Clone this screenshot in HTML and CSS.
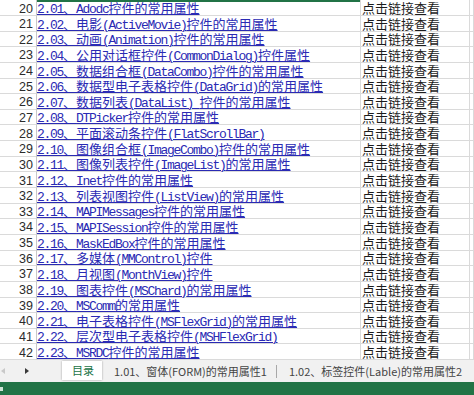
FILE: index.html
```html
<!DOCTYPE html>
<html lang="zh-CN">
<head>
<meta charset="utf-8">
<title>目录</title>
<link rel="stylesheet" href="styles.css">
</head>
<body>
<div class="sheet">
  <div class="grid">
    <div class="row first"><div class="rh">20</div><div class="cb"><a class="lnk"><span class="en">2.01</span>、<span class="en">Adodc</span>控件的常用属性</a></div><div class="cc">点击链接查看</div><div class="cd"></div></div>
    <div class="row"><div class="rh">21</div><div class="cb"><a class="lnk"><span class="en">2.02</span>、电影<span class="en">(ActiveMovie)</span>控件的常用属性</a></div><div class="cc">点击链接查看</div><div class="cd"></div></div>
    <div class="row"><div class="rh">22</div><div class="cb"><a class="lnk"><span class="en">2.03</span>、动画<span class="en">(Animation)</span>控件的常用属性</a></div><div class="cc">点击链接查看</div><div class="cd"></div></div>
    <div class="row"><div class="rh">23</div><div class="cb"><a class="lnk"><span class="en">2.04</span>、公用对话框控件<span class="en">(CommonDialog)</span>控件属性</a></div><div class="cc">点击链接查看</div><div class="cd"></div></div>
    <div class="row"><div class="rh">24</div><div class="cb"><a class="lnk"><span class="en">2.05</span>、数据组合框<span class="en">(DataCombo)</span>控件的常用属性</a></div><div class="cc">点击链接查看</div><div class="cd"></div></div>
    <div class="row"><div class="rh">25</div><div class="cb"><a class="lnk"><span class="en">2.06</span>、数据型电子表格控件<span class="en">(DataGrid)</span>的常用属性</a></div><div class="cc">点击链接查看</div><div class="cd"></div></div>
    <div class="row"><div class="rh">26</div><div class="cb"><a class="lnk"><span class="en">2.07</span>、数据列表<span class="en">(DataList) </span>控件的常用属性</a></div><div class="cc">点击链接查看</div><div class="cd"></div></div>
    <div class="row"><div class="rh">27</div><div class="cb"><a class="lnk"><span class="en">2.08</span>、<span class="en">DTPicker</span>控件的常用属性</a></div><div class="cc">点击链接查看</div><div class="cd"></div></div>
    <div class="row"><div class="rh">28</div><div class="cb"><a class="lnk"><span class="en">2.09</span>、平面滚动条控件<span class="en">(FlatScrollBar)</span></a></div><div class="cc">点击链接查看</div><div class="cd"></div></div>
    <div class="row"><div class="rh">29</div><div class="cb"><a class="lnk"><span class="en">2.10</span>、图像组合框<span class="en">(ImageCombo)</span>控件的常用属性</a></div><div class="cc">点击链接查看</div><div class="cd"></div></div>
    <div class="row"><div class="rh">30</div><div class="cb"><a class="lnk"><span class="en">2.11</span>、图像列表控件<span class="en">(ImageList)</span>的常用属性</a></div><div class="cc">点击链接查看</div><div class="cd"></div></div>
    <div class="row"><div class="rh">31</div><div class="cb"><a class="lnk"><span class="en">2.12</span>、<span class="en">Inet</span>控件的常用属性</a></div><div class="cc">点击链接查看</div><div class="cd"></div></div>
    <div class="row"><div class="rh">32</div><div class="cb"><a class="lnk"><span class="en">2.13</span>、列表视图控件<span class="en">(ListView)</span>的常用属性</a></div><div class="cc">点击链接查看</div><div class="cd"></div></div>
    <div class="row"><div class="rh">33</div><div class="cb"><a class="lnk"><span class="en">2.14</span>、<span class="en">MAPIMessages</span>控件的常用属性</a></div><div class="cc">点击链接查看</div><div class="cd"></div></div>
    <div class="row"><div class="rh">34</div><div class="cb"><a class="lnk"><span class="en">2.15</span>、<span class="en">MAPISession</span>控件的常用属性</a></div><div class="cc">点击链接查看</div><div class="cd"></div></div>
    <div class="row"><div class="rh">35</div><div class="cb"><a class="lnk"><span class="en">2.16</span>、<span class="en">MaskEdBox</span>控件的常用属性</a></div><div class="cc">点击链接查看</div><div class="cd"></div></div>
    <div class="row"><div class="rh">36</div><div class="cb"><a class="lnk"><span class="en">2.17</span>、多媒体<span class="en">(MMControl)</span>控件</a></div><div class="cc">点击链接查看</div><div class="cd"></div></div>
    <div class="row"><div class="rh">37</div><div class="cb"><a class="lnk"><span class="en">2.18</span>、月视图<span class="en">(MonthView)</span>控件</a></div><div class="cc">点击链接查看</div><div class="cd"></div></div>
    <div class="row"><div class="rh">38</div><div class="cb"><a class="lnk"><span class="en">2.19</span>、图表控件<span class="en">(MSChard)</span>的常用属性</a></div><div class="cc">点击链接查看</div><div class="cd"></div></div>
    <div class="row"><div class="rh">39</div><div class="cb"><a class="lnk"><span class="en">2.20</span>、<span class="en">MSComm</span>的常用属性</a></div><div class="cc">点击链接查看</div><div class="cd"></div></div>
    <div class="row"><div class="rh">40</div><div class="cb"><a class="lnk"><span class="en">2.21</span>、电子表格控件<span class="en">(MSFlexGrid)</span>的常用属性</a></div><div class="cc">点击链接查看</div><div class="cd"></div></div>
    <div class="row"><div class="rh">41</div><div class="cb"><a class="lnk"><span class="en">2.22</span>、层次型电子表格控件<span class="en">(MSHFlexGrid)</span></a></div><div class="cc">点击链接查看</div><div class="cd"></div></div>
    <div class="row"><div class="rh">42</div><div class="cb"><a class="lnk"><span class="en">2.23</span>、<span class="en">MSRDC</span>控件的常用属性</a></div><div class="cc">点击链接查看</div><div class="cd"></div></div>
  </div>
  <div class="tabbar">
    <div class="nav">
      <span class="arrow prev"></span>
      <span class="arrow next"></span>
    </div>
    <div class="tab active">目录</div>
    <div class="tab">1.01、窗体(FORM)的常用属性1</div>
    <div class="sep"></div>
    <div class="tab last">1.02、标签控件(Lable)的常用属性2</div>
    <div class="sep"></div>
  </div>
  <div class="status"><span class="status-icon"></span></div>
</div>
</body>
</html>
```

FILE: styles.css
```css
html, body {
  margin: 0;
  padding: 0;
}
body {
  width: 474px;
  height: 395px;
  overflow: hidden;
  background: #ffffff;
  font-family: "Noto Sans CJK SC", sans-serif;
}
.sheet {
  display: flex;
  flex-direction: column;
  height: 395px;
}
.grid {
  height: 360px;
  overflow: hidden;
  flex: none;
}
.row {
  display: grid;
  grid-template-columns: 37px 324px 109px 1fr;
  height: 15.65px;
}
.row > div {
  box-sizing: border-box;
  border-bottom: 1px solid #dadada;
  border-right: 1px solid #dadada;
  display: flex;
  align-items: flex-end;
  white-space: nowrap;
}
.rh {
  justify-content: flex-end;
  padding-right: 3px;
  font-family: "Liberation Sans", sans-serif;
  font-size: 12.5px;
  line-height: 11.5px;
  color: #2b2b2b;
}
.row > .rh {
  border-right-color: #c8c8c8;
}
.first > .cb {
  box-shadow: inset 0 2px 0 #217346;
}
.lnk {
  font-size: 13px;
  line-height: 15px;
  color: #2a2ab4;
  text-decoration: underline;
  text-decoration-thickness: 1px;
  text-underline-offset: 1px;
}
.en {
  font-family: "Liberation Mono", monospace;
  font-size: 13px;
  line-height: 10px;
  letter-spacing: -1.3px;
}
.cc {
  padding-left: 1px;
  font-size: 13px;
  line-height: 15px;
  color: #1c1c1c;
}
.tabbar {
  height: 22px;
  flex: none;
  background: #f1f1f1;
  display: flex;
  align-items: center;
  overflow: hidden;
  font-size: 11px;
  color: #444444;
}
.tabbar > * {
  flex: none;
}
.nav {
  width: 62px;
  display: flex;
  align-items: center;
  gap: 20px;
  padding-left: 1px;
  box-sizing: border-box;
}
.arrow {
  width: 0;
  height: 0;
  border-top: 3.5px solid transparent;
  border-bottom: 3.5px solid transparent;
}
.prev {
  border-right: 4px solid #c9c9c9;
}
.next {
  border-left: 4px solid #3a3a3a;
}
.tab {
  padding: 0 9px 0 12px;
  line-height: 19px;
  white-space: nowrap;
}
.tab.last {
  padding-right: 13px;
}
.tab.active {
  align-self: flex-start;
  margin-top: 1px;
  padding: 0 8px 0 10px;
  background: #ffffff;
  color: #217346;
  box-shadow: 0 0 2px rgba(0, 0, 0, 0.35);
}
.sep {
  width: 1px;
  height: 13px;
  background: #a8a8a8;
}
.status {
  flex: 1;
  background: #217346;
  display: flex;
  align-items: center;
}
.status-icon {
  width: 3px;
  height: 4px;
  background: #cfe3d6;
}
```
